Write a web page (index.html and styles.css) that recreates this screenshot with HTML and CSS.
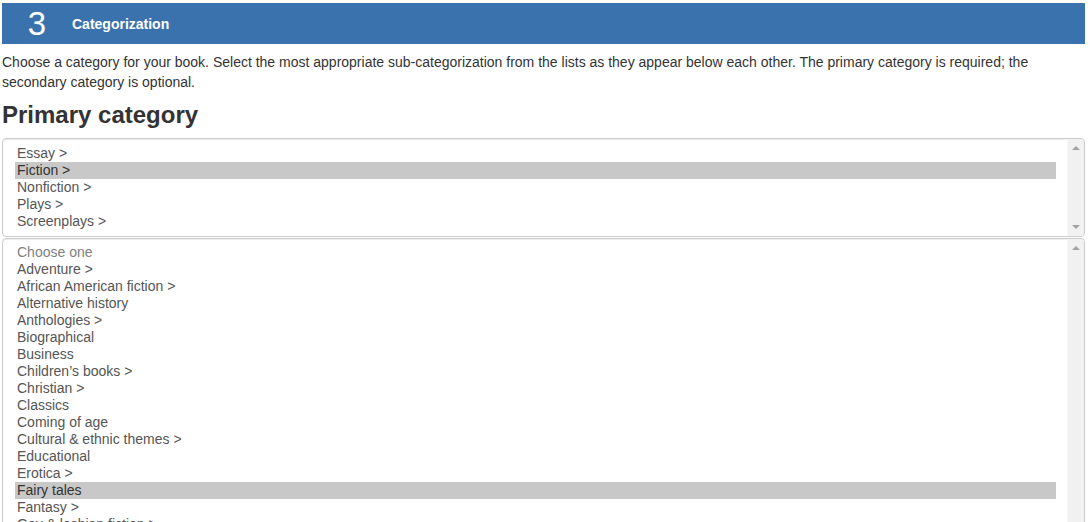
FILE: index.html
```html
<!DOCTYPE html>
<html lang="en">
<head>
<meta charset="utf-8">
<title>Categorization</title>
<link rel="stylesheet" href="styles.css">
</head>
<body>
<div class="page">
  <div class="step-bar">
    <span class="step-num">3</span>
    <span class="step-title">Categorization</span>
  </div>
  <p class="intro">Choose a category for your book. Select the most appropriate sub-categorization from the lists as they appear below each other. The primary category is required; the secondary category is optional.</p>
  <h3 class="section-title">Primary category</h3>
  <div class="listbox lb-top">
    <div class="opts">
      <div class="opt">Essay &gt;</div>
      <div class="opt sel">Fiction &gt;</div>
      <div class="opt">Nonfiction &gt;</div>
      <div class="opt">Plays &gt;</div>
      <div class="opt">Screenplays &gt;</div>
    </div>
    <div class="sb">
      <span class="arr up"></span>
      <span class="arr down"></span>
    </div>
  </div>
  <div class="listbox lb-sub">
    <div class="opts">
      <div class="opt muted">Choose one</div>
      <div class="opt">Adventure &gt;</div>
      <div class="opt">African American fiction &gt;</div>
      <div class="opt">Alternative history</div>
      <div class="opt">Anthologies &gt;</div>
      <div class="opt">Biographical</div>
      <div class="opt">Business</div>
      <div class="opt">Children’s books &gt;</div>
      <div class="opt">Christian &gt;</div>
      <div class="opt">Classics</div>
      <div class="opt">Coming of age</div>
      <div class="opt">Cultural &amp; ethnic themes &gt;</div>
      <div class="opt">Educational</div>
      <div class="opt">Erotica &gt;</div>
      <div class="opt sel">Fairy tales</div>
      <div class="opt">Fantasy &gt;</div>
      <div class="opt">Gay &amp; lesbian fiction &gt;</div>
    </div>
    <div class="sb">
      <span class="arr up"></span>
    </div>
  </div>
</div>
</body>
</html>
```

FILE: styles.css
```css
html, body {
  margin: 0;
  padding: 0;
  background: #ffffff;
}
body {
  font-family: "Liberation Sans", Arial, sans-serif;
  color: #333333;
  overflow: hidden;
  height: 522px;
}
.page {
  padding: 3px 5px 0 2px;
}
.step-bar {
  display: flex;
  align-items: center;
  height: 41px;
  background: #3a72ad;
  color: #ffffff;
}
.step-num {
  width: 70px;
  text-align: center;
  font-size: 33px;
  line-height: 41px;
  font-weight: normal;
}
.step-title {
  font-size: 14px;
  font-weight: bold;
}
.intro {
  margin: 8px 0 10px 0;
  font-size: 14px;
  line-height: 20px;
}
.section-title {
  margin: 0 0 10px 0;
  font-size: 24px;
  line-height: 26px;
  font-weight: bold;
}
.listbox {
  display: flex;
  border: 1px solid #cccccc;
  border-radius: 4px;
  box-shadow: inset 0 1px 1px rgba(0, 0, 0, 0.075);
  overflow: hidden;
  background: #ffffff;
}
.lb-top {
  height: 97px;
}
.lb-sub {
  margin-top: 1px;
  height: 290px;
}
.opts {
  flex: 1;
  padding: 5px 11px 6px 12px;
  font-size: 14px;
  color: #555555;
  overflow: hidden;
}
.lb-top .opts {
  padding-top: 6px;
}
.opt {
  padding: 0 2px 1px 2px;
  line-height: 16px;
  white-space: nowrap;
}
.opt.sel {
  background: #c8c8c8;
  color: #333333;
}
.opt.muted {
  color: #808080;
}
.sb {
  width: 17px;
  background: #f1f1f1;
  border-left: 1px solid #f7f7f7;
  display: flex;
  flex-direction: column;
  justify-content: space-between;
  align-items: center;
  padding: 7px 0 7px 0;
  box-sizing: border-box;
}
.arr {
  width: 0;
  height: 0;
  border-left: 4px solid transparent;
  border-right: 4px solid transparent;
}
.arr.up {
  border-bottom: 4px solid #a3a3a3;
}
.arr.down {
  border-top: 4px solid #a3a3a3;
}
```
